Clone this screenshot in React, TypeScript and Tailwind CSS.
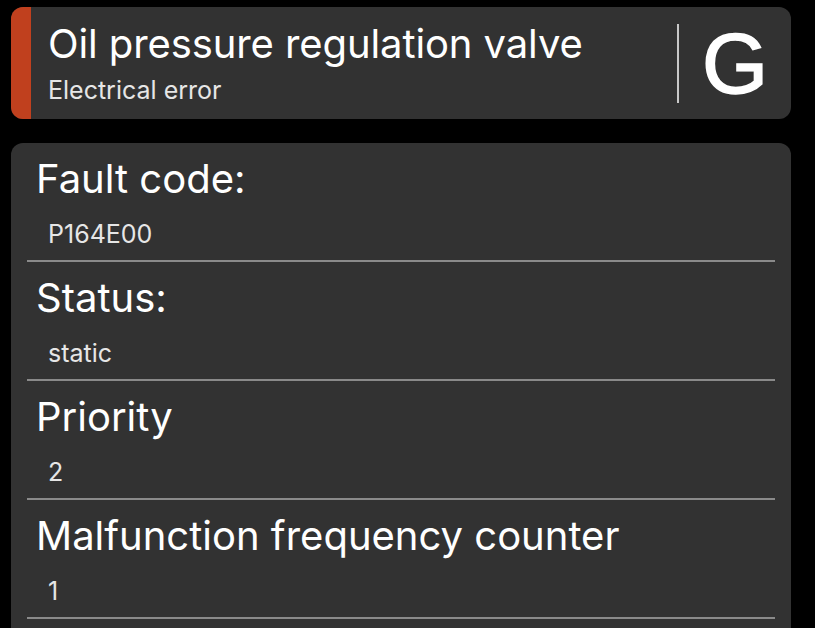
import React from 'react';

interface Field {
  label: string;
  value: string;
}

const fields: Field[] = [
  { label: 'Fault code:', value: 'P164E00' },
  { label: 'Status:', value: 'static' },
  { label: 'Priority', value: '2' },
  { label: 'Malfunction frequency counter', value: '1' },
];

const font = { fontFamily: 'Inter, "Noto Sans", sans-serif' };

export default function App() {
  return (
    <div className="w-[815px] h-[628px] overflow-hidden bg-black text-white pt-[7px]" style={font}>
      {/* Header card */}
      <div className="ml-[11px] w-[780px] h-[112px] flex rounded-xl overflow-hidden bg-[#323232]">
        <div className="w-[20px] bg-[#c0401e]" />
        <div className="flex-1 flex items-center pl-[17px] pr-[20px]">
          <div className="flex-1 self-start pt-[14px]">
            <div className="text-[40px] leading-[46px] tracking-[-0.1px]">Oil pressure regulation valve</div>
            <div className="mt-[8px] text-[25px] leading-[30px] text-[#e6e6e6]">Electrical error</div>
          </div>
          <div className="w-[2px] h-[79px] mr-[20px] bg-[#c8c8c8]" />
          <div
            className="w-[72px] flex justify-center text-[85px] leading-none [-webkit-text-stroke:1.5px_white]"
            style={{ fontFamily: '"Liberation Sans", sans-serif' }}
          >
            G
          </div>
        </div>
      </div>

      {/* Details card */}
      <div className="ml-[11px] w-[780px] mt-[24px] bg-[#323232] rounded-t-xl px-4 pb-[20px]">
        {fields.map((f) => (
          <div key={f.label} className="pt-[12px] border-b-2 border-[#8a8a8a] h-[119px]">
            <div className="pl-[9px] text-[40px] leading-[48px]">{f.label}</div>
            <div className="pl-[21px] mt-[17px] text-[25px] leading-[28px] text-[#e6e6e6]">{f.value}</div>
          </div>
        ))}
      </div>
    </div>
  );
}
